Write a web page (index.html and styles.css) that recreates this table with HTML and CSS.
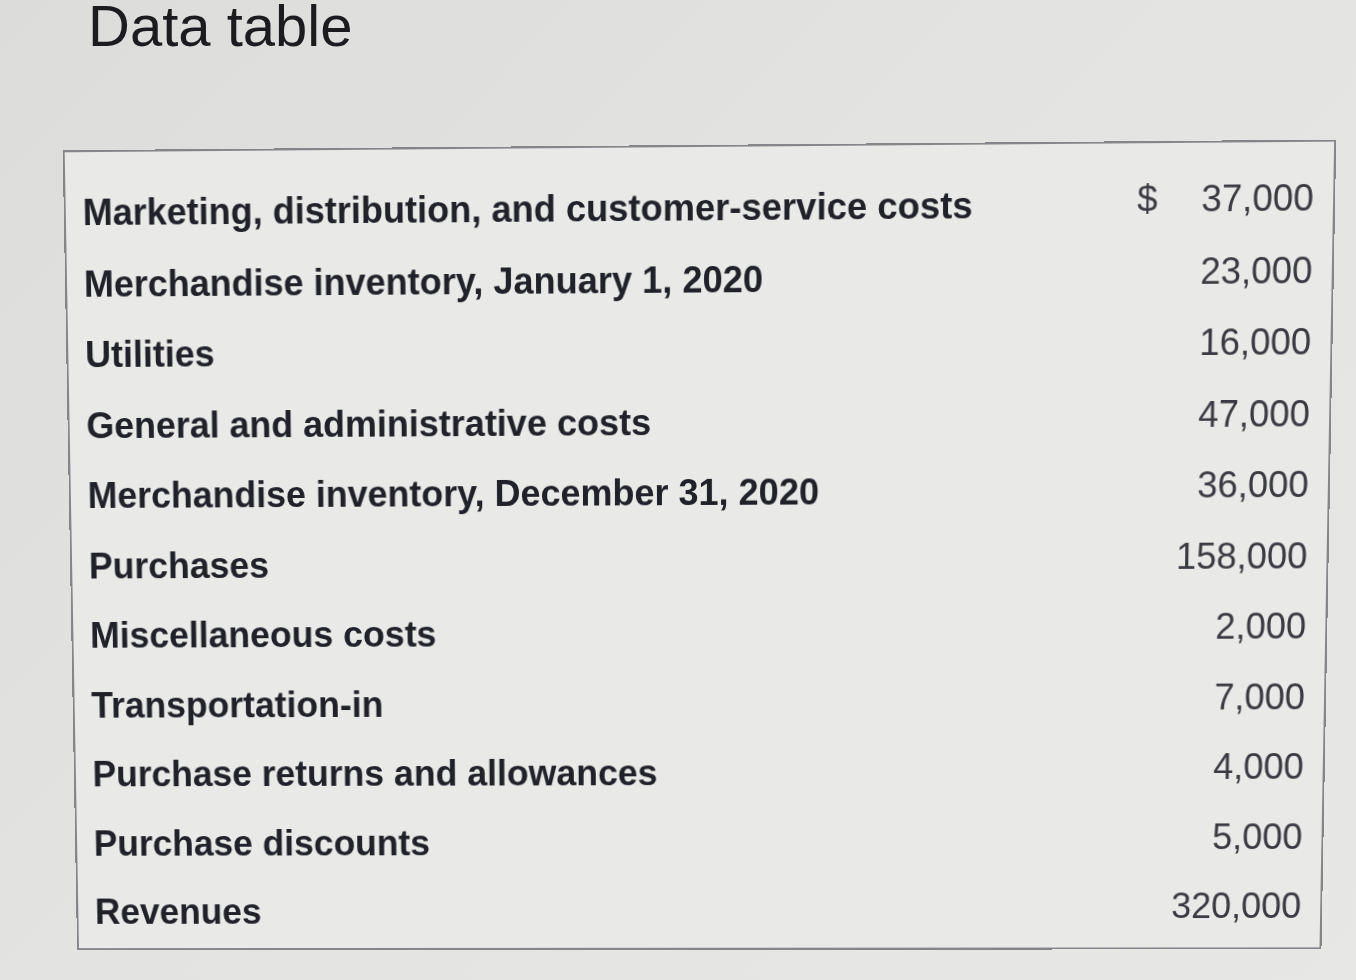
FILE: index.html
```html
<!DOCTYPE html>
<html lang="en">
<head>
<meta charset="utf-8">
<title>Data table</title>
<link rel="stylesheet" href="styles.css">
</head>
<body>
<h1 class="title">Data table</h1>
<div class="box">
  <div class="grid">
    <div class="label">Marketing, distribution, and customer-service costs</div><div class="cur">$</div><div class="amt">37,000</div>
    <div class="label">Merchandise inventory, January 1, 2020</div><div class="cur"></div><div class="amt">23,000</div>
    <div class="label">Utilities</div><div class="cur"></div><div class="amt">16,000</div>
    <div class="label">General and administrative costs</div><div class="cur"></div><div class="amt">47,000</div>
    <div class="label">Merchandise inventory, December 31, 2020</div><div class="cur"></div><div class="amt">36,000</div>
    <div class="label">Purchases</div><div class="cur"></div><div class="amt">158,000</div>
    <div class="label">Miscellaneous costs</div><div class="cur"></div><div class="amt">2,000</div>
    <div class="label">Transportation-in</div><div class="cur"></div><div class="amt">7,000</div>
    <div class="label">Purchase returns and allowances</div><div class="cur"></div><div class="amt">4,000</div>
    <div class="label">Purchase discounts</div><div class="cur"></div><div class="amt">5,000</div>
    <div class="label">Revenues</div><div class="cur"></div><div class="amt">320,000</div>
  </div>
</div>
</body>
</html>
```
FILE: styles.css
```css
html, body {
  margin: 0;
  padding: 0;
}
body {
  width: 1356px;
  height: 980px;
  overflow: hidden;
  background: linear-gradient(135deg, #dcdcda 0%, #e3e3e1 45%, #e7e7e5 100%);
  font-family: "Liberation Sans", Arial, sans-serif;
}
.title {
  margin: 0 0 0 88px;
  font-size: 58px;
  line-height: 52px;
  font-weight: 400;
  color: #1c1c20;
}
.box {
  margin: 97px 0 0 66px;
  width: 1259px;
  box-sizing: border-box;
  height: 806px;
  border: 2px solid #85858a;
  background: #e9e9e7;
  padding: 25px 19px 0 17px;
  transform: perspective(2000px) rotateX(-3.3deg) rotateY(-1.1deg) skewY(-0.32deg);
}
.grid {
  display: grid;
  grid-template-columns: 1fr auto 130px;
  column-gap: 23px;
  grid-auto-rows: 70.5px;
  font-size: 36px;
  line-height: 70px;
}
.label {
  font-weight: 700;
  color: #202129;
  white-space: nowrap;
}
.cur, .amt {
  color: #3a3a42;
  margin-top: -5px;
}
.amt {
  text-align: right;
}
```
